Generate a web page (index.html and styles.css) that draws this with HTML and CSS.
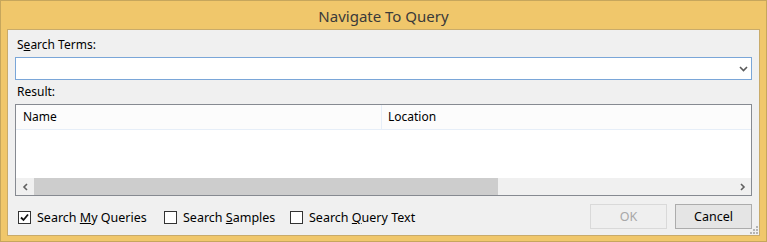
FILE: index.html
```html
<!DOCTYPE html>
<html lang="en">
<head>
    <meta charset="UTF-8">
    <title>Navigate To Query</title>
    <link rel="stylesheet" href="styles.css">
</head>
<body>
<div class="window">
    <div class="titlebar">Navigate To Query</div>
    <div class="client">
        <div class="label">S<u>e</u>arch Terms:</div>
        <div class="combo">
            <svg class="chev" width="9" height="6" viewBox="0 0 9 6">
                <path d="M1 1 L4.5 4.5 L8 1" fill="none" stroke="#5a5a5a" stroke-width="1.6"/>
            </svg>
        </div>
        <div class="label">Result:</div>
        <div class="list">
            <div class="header">
                <div class="col col-name">Name</div>
                <div class="col col-loc">Location</div>
            </div>
            <div class="rows"></div>
            <div class="hscroll">
                <div class="arrow">
                    <svg width="6" height="8" viewBox="0 0 6 8"><path d="M5 1 L2 4 L5 7" fill="none" stroke="#606060" stroke-width="1.6"/></svg>
                </div>
                <div class="track"><div class="thumb"></div></div>
                <div class="arrow">
                    <svg width="6" height="8" viewBox="0 0 6 8"><path d="M1 1 L4 4 L1 7" fill="none" stroke="#606060" stroke-width="1.6"/></svg>
                </div>
            </div>
        </div>
        <div class="bottom">
            <label class="check item1"><span class="box checked">
                <svg width="11" height="11" viewBox="0 0 11 11"><path d="M2 5.5 L4.5 8 L9 2.5" fill="none" stroke="#111" stroke-width="1.8"/></svg>
            </span><span>Search <u>M</u>y Queries</span></label>
            <label class="check item2"><span class="box"></span><span>Search <u>S</u>amples</span></label>
            <label class="check"><span class="box"></span><span>Search <u>Q</u>uery Text</span></label>
            <div class="spacer"></div>
            <button class="btn" disabled>OK</button>
            <button class="btn">Cancel</button>
            <div class="grip">
                <svg width="8" height="8" viewBox="0 0 8 8" fill="#b4b4b4">
                    <rect x="6" y="0" width="2" height="2"/>
                    <rect x="3" y="3" width="2" height="2"/><rect x="6" y="3" width="2" height="2"/>
                    <rect x="0" y="6" width="2" height="2"/><rect x="3" y="6" width="2" height="2"/><rect x="6" y="6" width="2" height="2"/>
                </svg>
            </div>
        </div>
    </div>
</div>
</body>
</html>
```

FILE: styles.css
```css
body{
    margin: 0;
    font-family: "Noto Sans", "Open Sans", sans-serif;
    font-size: 12px;
    color: #000;
}

.window{
    width: 767px;
    height: 242px;
    box-sizing: border-box;
    background-color: #f0c76b;
    border: 1px solid #c6a65c;
    display: flex;
    flex-direction: column;
}

.titlebar{
    height: 28px;
    line-height: 30px;
    text-align: center;
    font-size: 15px;
    color: #3a3a3a;
}

.client{
    margin: 0 6px;
    height: 207px;
    box-sizing: border-box;
    border: 1px solid #c9ab6a;
    background-color: #f0f0f0;
    display: flex;
    flex-direction: column;
    position: relative;
}

.label{
    line-height: 16px;
    padding-left: 9px;
    margin-top: 7px;
}

.combo{
    margin: 4px 7px 0 7px;
    height: 23px;
    box-sizing: border-box;
    border: 1px solid #7aa6d8;
    background-color: #fff;
    display: flex;
    align-items: center;
    justify-content: flex-end;
    padding-right: 3px;
}
.combo + .label{
    margin-top: 4px;
}

.list{
    margin: 4px 7px 0 7px;
    height: 92px;
    box-sizing: border-box;
    border: 1px solid #868a91;
    background-color: #fff;
    display: flex;
    flex-direction: column;
}
.header{
    height: 25px;
    box-sizing: border-box;
    border-bottom: 1px solid #e6eef8;
    background-color: #fcfcfc;
    display: flex;
    line-height: 24px;
}
.col{
    padding-left: 7px;
}
.col-name{
    width: 358px;
    border-right: 1px solid #e6eef8;
}
.col-loc{
    padding-left: 6px;
}
.rows{
    flex: 1;
}
.hscroll{
    height: 17px;
    display: flex;
    background-color: #f0f0f0;
}
.arrow{
    width: 17px;
    display: flex;
    align-items: center;
    justify-content: center;
}
.track{
    flex: 1;
    display: flex;
    padding: 0 1px;
}
.thumb{
    width: 464px;
    background-color: #cdcdcd;
}

.bottom{
    margin-top: 8px;
    height: 25px;
    display: flex;
    align-items: center;
    padding: 0 7px 0 10px;
}
.check{
    display: flex;
    align-items: center;
    line-height: 16px;
    white-space: pre;
    font-size: 12.5px;
    margin-top: 2px;
}
.item1{
    width: 146px;
}
.item2{
    width: 126px;
}
.box{
    width: 13px;
    height: 13px;
    box-sizing: border-box;
    border: 1px solid #333;
    background-color: #fff;
    margin-right: 6px;
    display: flex;
    align-items: center;
    justify-content: center;
}
.spacer{
    flex: 1;
}
.btn{
    width: 77px;
    height: 25px;
    margin-left: 8px;
    font-family: "Noto Sans", "Open Sans", sans-serif;
    font-size: 12.5px;
    color: #000;
    border: 1px solid #acacac;
    background-color: #e5e5e5;
    padding: 0;
}
.btn:disabled{
    color: #a8a8a8;
    border-color: #d9d9d9;
    background-color: #efefef;
}
.grip{
    position: absolute;
    right: 1px;
    bottom: 1px;
    line-height: 0;
}
```
